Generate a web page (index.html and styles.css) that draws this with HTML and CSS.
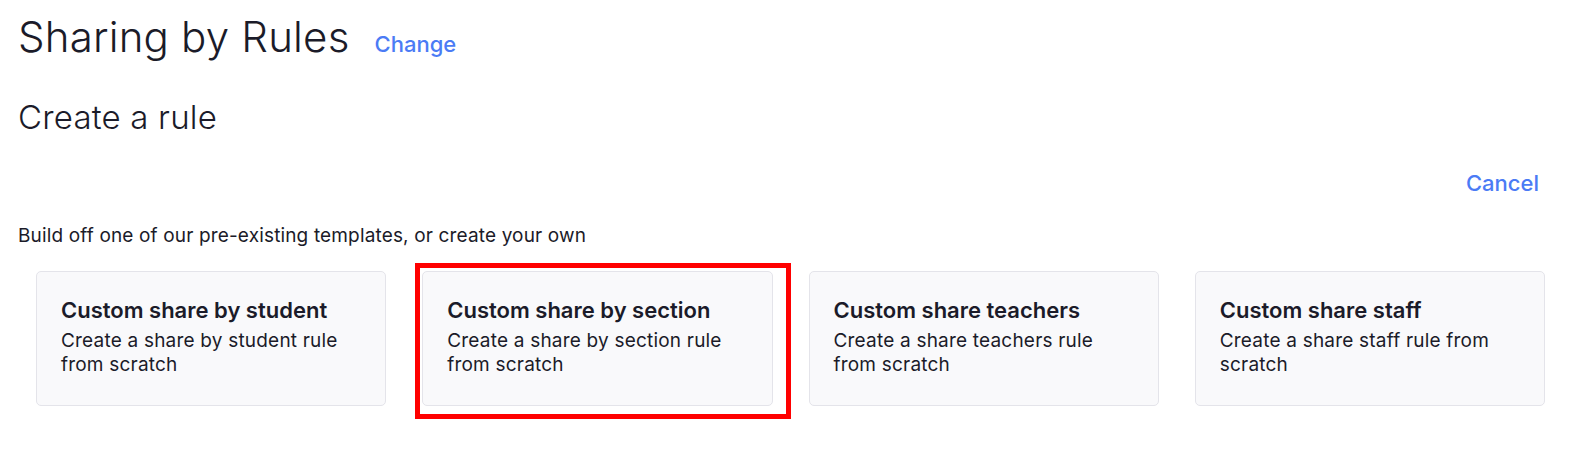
FILE: index.html
```html
<!DOCTYPE html>
<html lang="en">
<head>
    <meta charset="UTF-8">
    <meta name="viewport" content="width=device-width, initial-scale=1.0">
    <title>Sharing by Rules</title>
    <link rel="stylesheet" href="styles.css">
</head>
<body>
    <div class="page">
        <div class="page-header">
            <h1 class="page-title">Sharing by Rules</h1>
            <a href="#" class="link change-link">Change</a>
        </div>
        <h2 class="section-title">Create a rule</h2>
        <div class="actions">
            <a href="#" class="link cancel-link">Cancel</a>
        </div>
        <p class="intro">Build off one of our pre-existing templates, or create your own</p>
        <div class="templates">
            <div class="template-card">
                <div class="card-title">Custom share by student</div>
                <div class="card-text">Create a share by student rule from scratch</div>
            </div>
            <div class="template-card highlighted">
                <div class="card-title">Custom share by section</div>
                <div class="card-text">Create a share by section rule from scratch</div>
            </div>
            <div class="template-card">
                <div class="card-title">Custom share teachers</div>
                <div class="card-text">Create a share teachers rule from scratch</div>
            </div>
            <div class="template-card">
                <div class="card-title">Custom share staff</div>
                <div class="card-text">Create a share staff rule from scratch</div>
            </div>
        </div>
    </div>
</body>
</html>
```

FILE: styles.css
```css
body {
    margin: 0;
    font-family: Inter, Lato, sans-serif;
    color: #1b1b29;
    background-color: #ffffff;
}
.page {
    padding: 12px 40px 30px 18px;
}
.page-header {
    display: flex;
    align-items: baseline;
    gap: 25px;
}
.page-title {
    margin: 0;
    font-size: 42px;
    font-weight: 300;
    line-height: 50px;
    letter-spacing: 0.2px;
}
.link {
    color: #4b7bf5;
    text-decoration: none;
    font-weight: 500;
}
.change-link {
    font-size: 22px;
}
.section-title {
    margin: 35px 0 0;
    font-size: 33px;
    font-weight: 300;
    line-height: 40px;
    letter-spacing: 0.2px;
}
.actions {
    display: flex;
    justify-content: flex-end;
    margin-top: 32px;
}
.cancel-link {
    font-size: 22px;
    line-height: 28px;
}
.intro {
    margin: 27px 0 0;
    font-size: 19px;
    line-height: 24px;
    letter-spacing: 0.15px;
}
.templates {
    display: grid;
    grid-template-columns: repeat(4, 1fr);
    gap: 36px;
    margin: 23px -6px 0 18px;
}
.template-card {
    position: relative;
    height: 135px;
    box-sizing: border-box;
    padding: 24px 28px 0 24px;
    background-color: #f9f9fb;
    border: 1px solid #e4e4ea;
    border-radius: 5px;
}
.highlighted::after {
    content: "";
    position: absolute;
    top: -9px;
    left: -8px;
    right: -19px;
    bottom: -14px;
    border: 5px solid #ff0000;
}
.card-title {
    font-size: 22px;
    font-weight: 600;
    line-height: 28px;
}
.card-text {
    margin-top: 5px;
    font-size: 19px;
    line-height: 24px;
    letter-spacing: 0.2px;
}
```
